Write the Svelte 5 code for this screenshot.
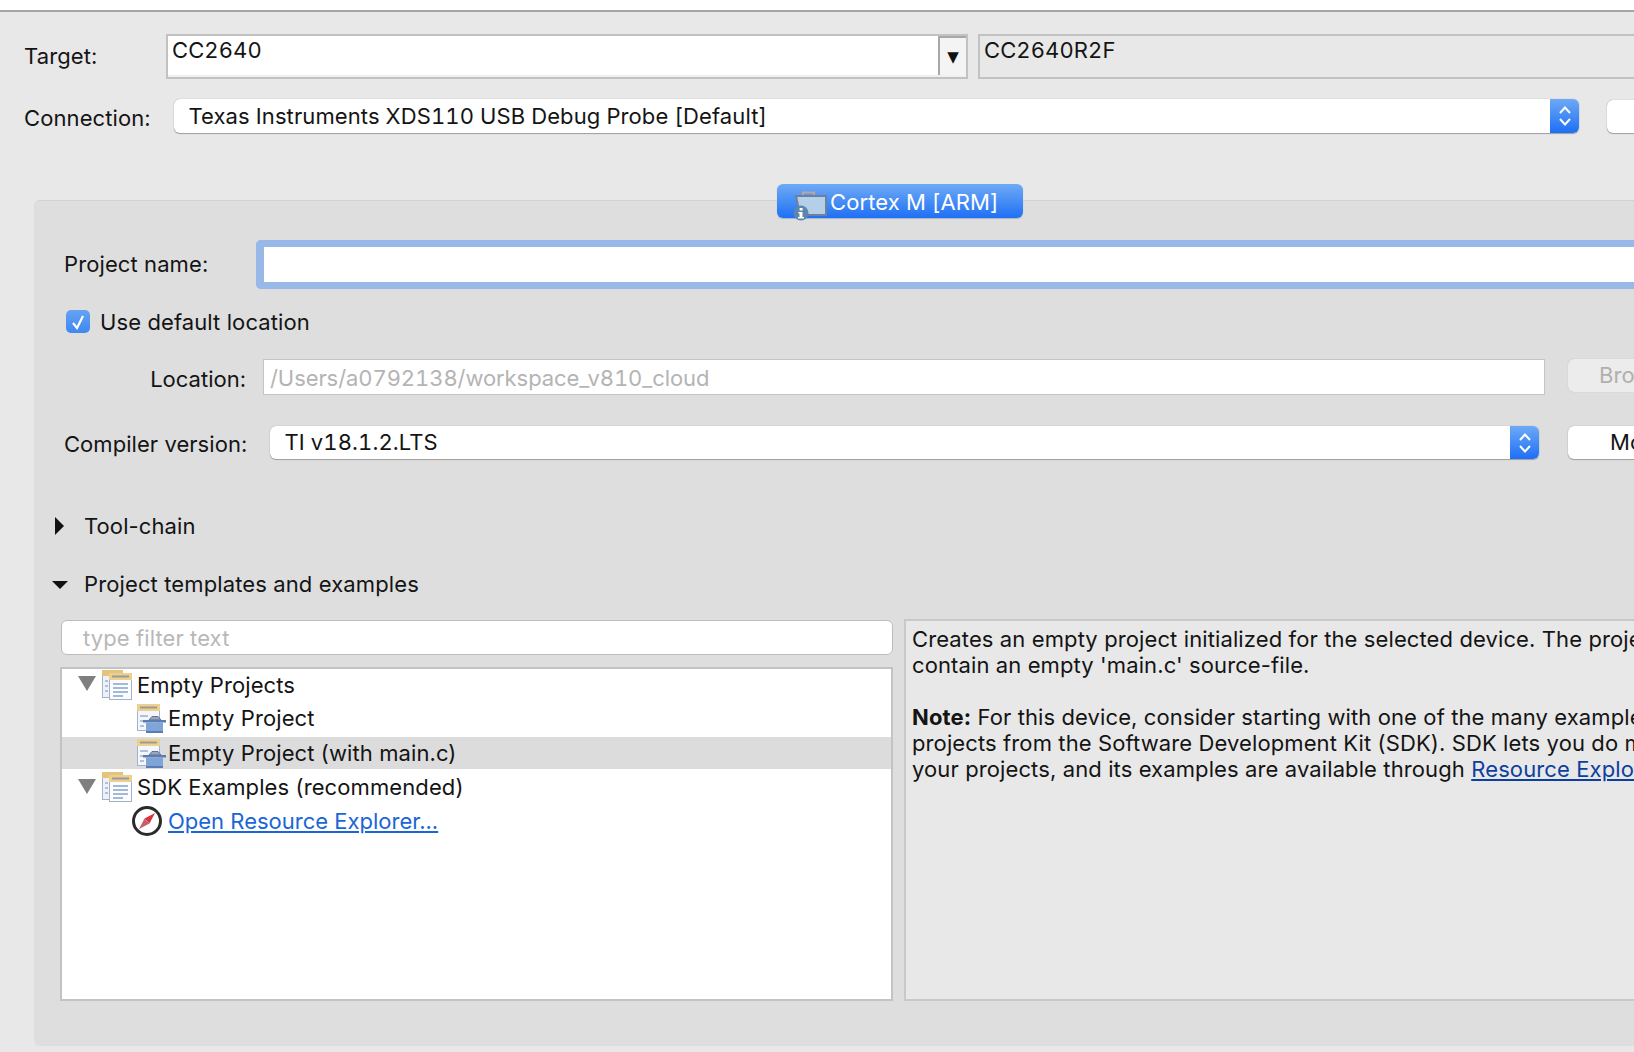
<script>
  const tree = [
    { label: 'Empty Projects', kind: 'group' },
    { label: 'Empty Project', kind: 'item' },
    { label: 'Empty Project (with main.c)', kind: 'item', selected: true },
    { label: 'SDK Examples (recommended)', kind: 'group' },
    { label: 'Open Resource Explorer...', kind: 'link' }
  ]
</script>

{#snippet stepper()}
  <span class="stepper">
    <svg width="16" height="26" viewBox="0 0 16 26" fill="none" stroke="#fff" stroke-width="2">
      <path d="M3 10 L8 4.5 L13 10" />
      <path d="M3 16 L8 21.5 L13 16" />
    </svg>
  </span>
{/snippet}

{#snippet groupIcon()}
  <svg class="icon" width="32" height="32" viewBox="0 0 32 32">
    <rect x="1.5" y="1.5" width="20" height="27" fill="#eef2f8" stroke="#a3b2cc" />
    <rect x="1" y="1" width="21" height="6" fill="#e4c47c" />
    <rect x="8.5" y="4.5" width="22" height="26" fill="#fbfcfe" stroke="#a3b2cc" />
    <rect x="8" y="4" width="23" height="7" fill="#ecd08c" />
    <rect x="11" y="6.5" width="17" height="2" fill="#9a9a9e" />
    <path d="M12 15h15M12 19h15M12 23h15M12 27h10" stroke="#86a2cc" stroke-width="1.6" />
    <path d="M4 12h3M4 17h3M4 22h3" stroke="#9db0cc" stroke-width="1.6" />
  </svg>
{/snippet}

{#snippet itemIcon()}
  <svg class="icon item" width="30" height="30" viewBox="0 0 30 30">
    <rect x="1.5" y="1.5" width="22" height="26" fill="#f3f6fa" stroke="#a3b2cc" />
    <rect x="1" y="1" width="23" height="7" fill="#ecd08c" />
    <rect x="4" y="3.5" width="17" height="2" fill="#9a9a9e" />
    <path d="M4 13h8M4 18h4M4 23h4" stroke="#9db0cc" stroke-width="1.6" />
    <path d="M16 13.5 L22 13.5 L25 17 L13 17 Z" fill="#9aa6bc" stroke="#5f7196" />
    <rect x="7" y="17" width="23" height="2.5" fill="#5b7cb0" />
    <rect x="10" y="19.5" width="17" height="10.5" fill="#7ea4d8" />
    <rect x="10" y="28" width="17" height="2" fill="#5b7cb0" />
  </svg>
{/snippet}

{#snippet compassIcon()}
  <svg class="icon compass" width="32" height="32" viewBox="0 0 32 32">
    <circle cx="16" cy="16" r="13.5" fill="#fff" stroke="#2b2b2b" stroke-width="3" />
    <path d="M24 8 L18.5 18.5 L13.5 13.5 Z" fill="#d9333f" />
    <path d="M8 24 L13.5 13.5 L18.5 18.5 Z" fill="#c4606a" />
  </svg>
{/snippet}

<div class="page">
  <div class="topbar"></div>

  <div class="row target-row">
    <span class="label target-label">Target:</span>
    <div class="combo">
      <span class="combo-text">CC2640</span>
      <span class="combo-btn">▼</span>
    </div>
    <div class="readonly">CC2640R2F</div>
  </div>

  <div class="row conn-row">
    <span class="label conn-label">Connection:</span>
    <div class="select conn-select">
      <span>Texas Instruments XDS110 USB Debug Probe [Default]</span>
      {@render stepper()}
    </div>
    <div class="btn conn-btn"></div>
  </div>

  <div class="panel">
    <div class="tab">
      <svg class="tab-icon" width="34" height="30" viewBox="0 0 34 30">
        <path d="M10 4 L10 1.5 L21 1.5 L21 4" fill="none" stroke="#b9a79c" stroke-width="2" />
        <path d="M3 5 H33 V24 H7 Z" fill="#b4cfe8" stroke="#6f7f9c" stroke-width="2" />
        <circle cx="8" cy="22" r="7.5" fill="#5d86ad" />
        <rect x="6.6" y="17" width="3" height="2.5" fill="#fff" />
        <path d="M5.5 21h4v5h1.5v1.5h-6V26h1.5v-3.5h-1Z" fill="#fff" />
      </svg>
      <span>Cortex M [ARM]</span>
    </div>

    <div class="row name-row">
      <span class="label name-label">Project name:</span>
      <div class="name-input"></div>
    </div>

    <div class="row check-row">
      <span class="check">
        <svg width="16" height="18" viewBox="0 0 16 18" fill="none" stroke="#fff" stroke-width="2.2">
          <path d="M3 10 L7 15 L13 3" />
        </svg>
      </span>
      <span class="label">Use default location</span>
    </div>

    <div class="row loc-row">
      <span class="label loc-label">Location:</span>
      <div class="loc-input">/Users/a0792138/workspace_v810_cloud</div>
      <div class="btn side-btn disabled">Browse...</div>
    </div>

    <div class="row comp-row">
      <span class="label comp-label">Compiler version:</span>
      <div class="select comp-select">
        <span>TI v18.1.2.LTS</span>
        {@render stepper()}
      </div>
      <div class="btn side-btn">More...</div>
    </div>

    <div class="row section tool-row">
      <span class="arrow-wrap"><span class="arrow-right"></span></span>
      <span class="label">Tool-chain</span>
    </div>

    <div class="row section templates-row">
      <span class="arrow-wrap"><span class="arrow-down"></span></span>
      <span class="label">Project templates and examples</span>
    </div>

    <div class="columns">
      <div class="left-col">
        <div class="filter">type filter text</div>
        <div class="tree">
          {#each tree as node}
            <div class="tree-row {node.kind}" class:selected={node.selected}>
              {#if node.kind === 'group'}
                <span class="twisty"></span>
                {@render groupIcon()}
              {:else if node.kind === 'item'}
                {@render itemIcon()}
              {:else}
                {@render compassIcon()}
              {/if}
              {#if node.kind === 'link'}
                <a href="#explorer">{node.label}</a>
              {:else}
                <span>{node.label}</span>
              {/if}
            </div>
          {/each}
        </div>
      </div>

      <div class="desc">
        <p>Creates an empty project initialized for the selected device. The project will<br />contain an empty 'main.c' source-file.</p>
        <p><strong>Note:</strong> For this device, consider starting with one of the many example<br />projects from the Software Development Kit (SDK). SDK lets you do more with<br />your projects, and its examples are available through <a href="#explorer">Resource Explorer</a></p>
      </div>
    </div>
  </div>
</div>

<style>
  :global(body) { margin: 0; background: #e8e8e8; }
  * { box-sizing: border-box; }
  .page {
    width: 1634px; height: 1052px; overflow: hidden; background: #e8e8e8;
    font-family: Inter, "Liberation Sans", sans-serif; font-size: 22px; color: #141414;
    letter-spacing: 0.1px;
  }
  .topbar { height: 12px; background: #fff; border-bottom: 2px solid #a5a5a5; }
  .row { display: flex; align-items: center; white-space: nowrap; }
  .label { flex-shrink: 0; }

  .target-row { margin-top: 22px; padding-left: 24px; height: 45px; }
  .target-label { width: 142px; padding-bottom: 2px; }
  .combo {
    width: 802px; height: 45px; flex-shrink: 0; display: flex; background: #f0f0f0;
    border: 2px solid #c2c2c2; padding-bottom: 2px;
  }
  .combo-text { flex: 1; padding: 1px 4px; line-height: 26px; background: #fff; font-variant-numeric: tabular-nums; }
  .combo-btn {
    width: 28px; background: #f4f4f4; border-left: 2px solid #a8a8a8; border-top: 2px solid #a8a8a8;
    font-size: 15px; line-height: 38px; text-align: center; color: #111;
    font-family: "DejaVu Sans", sans-serif;
  }
  .readonly {
    width: 700px; height: 45px; flex-shrink: 0; margin-left: 10px; padding: 1px 4px;
    line-height: 26px; border: 2px solid #c2c2c2; background: #e8e8e8; font-variant-numeric: tabular-nums;
  }

  .conn-row { margin-top: 20px; padding-left: 24px; height: 34px; }
  .conn-label { width: 149.5px; padding-top: 4px; }
  .select {
    display: flex; justify-content: space-between; height: 34px; flex-shrink: 0;
    background: #fff; border-radius: 6px; line-height: 35px;
    font-variant-numeric: tabular-nums;
    box-shadow: 0 0 1px #8a8a8a, 0 1px 1px #a0a0a0; overflow: hidden;
  }
  .conn-select { width: 1405.5px; padding-left: 15px; }
  .stepper {
    width: 29px; display: flex; align-items: center; justify-content: center;
    background: linear-gradient(#6ea9f7, #1d6ff5);
  }
  .btn {
    height: 33px; flex-shrink: 0; background: #fff; border-radius: 6px; text-align: center;
    box-shadow: 0 0 1px #8a8a8a, 0 1px 1px #a0a0a0;
  }
  .conn-btn { width: 100px; margin-left: 28px; }

  .panel {
    width: 1700px; height: 846px; margin: 67px 0 0 34px; padding-left: 30px;
    background: #dedede; border-radius: 6px; border-top: 1px solid #d2d2d2;
  }
  .tab {
    display: flex; align-items: center; width: 246px; height: 34px; margin: -17px 0 0 713px;
    padding: 1px 0 0 53px; position: relative; color: #fff; border-radius: 6px;
    background: linear-gradient(#6eaaf5, #1f70f5); box-shadow: 0 1px 1px #a9b4c6;
  }
  .tab-icon { position: absolute; left: 16px; top: 7px; }

  .name-row { margin-top: 22px; height: 49px; }
  .name-label { width: 192px; padding-bottom: 1px; }
  .name-input {
    flex: 1; height: 49px; background: #fff; border: 7px solid #98b9e8; border-left-width: 8px;
    border-right-width: 0; border-radius: 5px 0 0 5px;
  }

  .check-row { margin-top: 21px; height: 23px; padding-left: 2px; }
  .check {
    width: 24px; height: 23px; margin-right: 10px; border-radius: 5px;
    display: flex; align-items: center; justify-content: center;
    background: linear-gradient(#66a3f5, #3f87f0);
  }

  .loc-row { margin-top: 26px; height: 36px; }
  .loc-label { width: 199px; text-align: right; padding: 3px 17px 0 0; letter-spacing: 0; }
  .loc-input {
    width: 1282px; height: 36px; flex-shrink: 0; padding-left: 6px; line-height: 36px; background: #fff;
    color: #b4b4b4; border: 1px solid #c4c4c4; font-variant-numeric: tabular-nums; letter-spacing: -0.08px;
  }
  .side-btn { width: 120px; height: 33px; line-height: 32px; padding-left: 31px; text-align: left; }
  .loc-row .side-btn { margin-left: 23px; margin-top: -4px; }
  .disabled { background: #ececec; color: #b0b0b0; box-shadow: 0 0 1px #b0b0b0; }

  .comp-row { margin-top: 31px; height: 33px; }
  .comp-label { width: 205.5px; padding-top: 3px; letter-spacing: 0.05px; }
  .comp-select { width: 1269.5px; padding-left: 15px; height: 33px; line-height: 33px; }
  .comp-row .side-btn { margin-left: 29px; padding-left: 42px; }

  .section { height: 30px; margin-left: -14px; }
  .arrow-wrap { width: 34px; display: flex; flex-shrink: 0; }
  .tool-row { margin-top: 52px; }
  .templates-row { margin-top: 28px; letter-spacing: 0.12px; }
  .arrow-right { border-left: 9px solid #111; border-top: 9px solid transparent; border-bottom: 9px solid transparent; margin-left: 5px; }
  .arrow-down { border-top: 8px solid #111; border-left: 8px solid transparent; border-right: 8px solid transparent; margin: 2px 0 0 2px; }

  .columns { display: flex; gap: 11px; margin: 21px 0 0 -3px; }
  .left-col { width: 832px; flex-shrink: 0; }
  .filter {
    height: 35px; padding-left: 21px; line-height: 34px; background: #fff; color: #b8b8b8;
    border: 1px solid #bdbdbd; border-radius: 6px;
  }
  .tree { height: 334px; margin: 12px 0 0 -1px; background: #fff; border: 2px solid #c3c3c3; }
  .tree-row { display: flex; align-items: center; height: 34px; white-space: nowrap; }
  .tree-row:first-child { height: 31px; }
  .tree-row:nth-child(2) { height: 36px; }
  .tree-row.group { padding-left: 16px; }
  .tree-row.item { padding-left: 74px; gap: 2px; }
  .tree-row.link { padding-left: 69px; gap: 5px; }
  .tree-row.selected { background: #dcdcdc; height: 32px; margin: 1px 0; }
  .twisty { width: 0; height: 0; margin-right: 7px; margin-top: -2px; border-top: 15px solid #7f7f7f; border-left: 9px solid transparent; border-right: 9px solid transparent; }
  .icon { flex-shrink: 0; }
  .group .icon { margin-right: 4px; margin-left: -2px; }
  .tree-row a { color: #1a66d6; letter-spacing: 0; }

  .desc {
    width: 760px; height: 382px; flex-shrink: 0; margin-top: -1px; padding: 5px 6px; white-space: nowrap;
    background: #e8e8e8; border: 2px solid #c9c9c9; line-height: 26px; letter-spacing: 0.11px;
  }
  .desc p { margin: 0 0 26px; }
  .desc a { color: #0e3f9e; }
  .desc strong { font-weight: 700; }
</style>
